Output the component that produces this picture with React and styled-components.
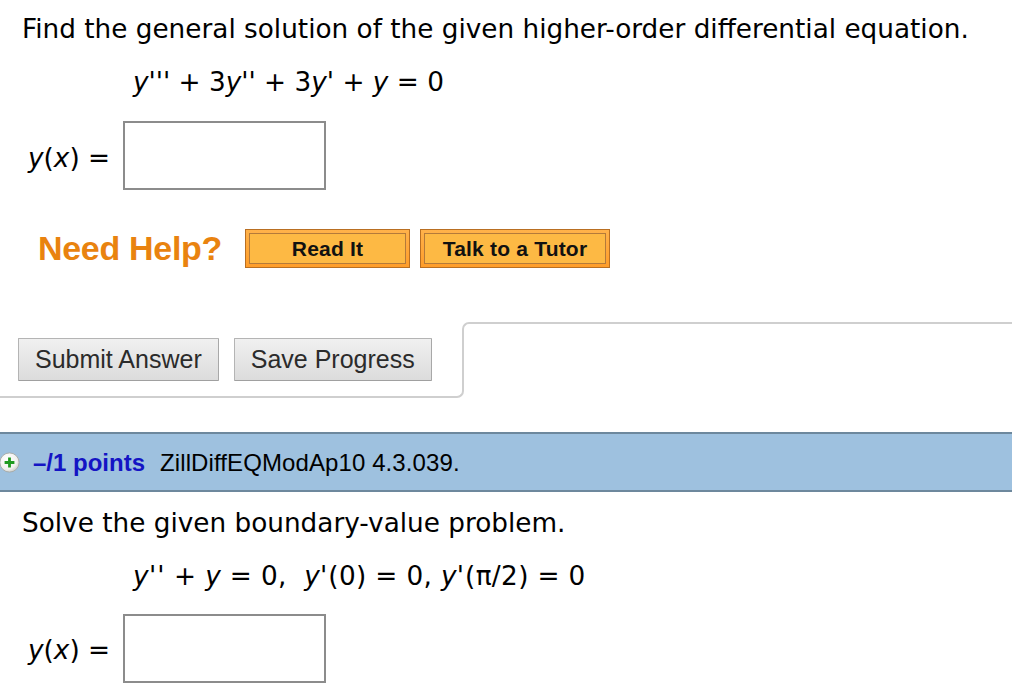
import React from "react";
import styled, { createGlobalStyle } from "styled-components";

const Global = createGlobalStyle`
  html, body { margin: 0; padding: 0; background: #fff; }
  body { font-family: "DejaVu Sans", Verdana, sans-serif; color: #000; }
`;

const Page = styled.div`
  width: 1012px;
  height: 692px;
  overflow: hidden;
  display: flex;
  flex-direction: column;
`;

const Question = styled.div`
  display: flex;
  flex-direction: column;
  padding-left: 22px;
  padding-top: ${(p) => p.$top}px;
`;

const Prompt = styled.div`
  font-size: 26.3px;
  line-height: 30px;
  white-space: nowrap;
`;

const Equation = styled.div`
  font-size: 26.3px;
  line-height: 30px;
  margin-top: 23px;
  margin-left: 111px;
  white-space: pre;
  letter-spacing: ${(p) => p.$ls || 0}px;
`;

const V = styled.i`
  font-style: italic;
`;

const Prime = styled.i`
  font-style: italic;
  letter-spacing: ${(p) => p.$ls || 0}px;
`;

const AnswerRow = styled.div`
  display: flex;
  align-items: flex-start;
  margin-top: ${(p) => p.$top}px;
  margin-left: 6px;
`;

const AnswerLabel = styled.span`
  font-size: 26.3px;
  line-height: 30px;
  margin-top: ${(p) => p.$top}px;
  width: 95px;
  white-space: pre;
`;

const AnswerBox = styled.div`
  width: 203px;
  height: 69px;
  box-sizing: border-box;
  border: 2px solid #8c8c8c;
  background: #fff;
`;

const HelpRow = styled.div`
  display: flex;
  align-items: center;
  margin-top: 39px;
  margin-left: 16px;
  height: 39px;
`;

const HelpLabel = styled.span`
  font-family: "Liberation Sans", Arial, sans-serif;
  font-weight: bold;
  font-size: 34px;
  color: #e9830f;
  letter-spacing: -0.3px;
  width: 207px;
  white-space: nowrap;
`;

const HelpButton = styled.div`
  box-sizing: border-box;
  width: ${(p) => p.$w}px;
  height: 39px;
  margin-right: 10px;
  border: 1px solid #b96f22;
  background: linear-gradient(#ffb24a, #ff9d2a);
  padding: 3px;
  display: flex;
`;

const HelpInner = styled.span`
  flex: 1;
  box-sizing: border-box;
  border: 1px solid #b47a3a;
  background: #fdb944;
  display: flex;
  align-items: center;
  justify-content: center;
  font-family: "Liberation Sans", Arial, sans-serif;
  font-weight: bold;
  font-size: 21px;
  letter-spacing: 0.2px;
  color: #111;
`;

const ActionRow = styled.div`
  display: flex;
  margin-top: 54px;
  height: 76px;
`;

const ActionLeft = styled.div`
  box-sizing: border-box;
  width: 464px;
  margin-top: 9px;
  padding: 7px 0 0 18px;
  border-right: 2px solid #cfcfcf;
  border-bottom: 2px solid #cfcfcf;
  border-bottom-right-radius: 7px;
  display: flex;
  align-items: flex-start;
  gap: 15px;
`;

const ActionRight = styled.div`
  flex: 1;
  margin-left: -2px;
  margin-bottom: 9px;
  border-top: 2px solid #cfcfcf;
  border-left: 2px solid #cfcfcf;
  border-top-left-radius: 7px;
`;

const GrayButton = styled.button`
  box-sizing: border-box;
  height: 43px;
  padding: 0 16px;
  border: 1px solid #b4b4b4;
  border-right-color: #a8a8a8;
  border-bottom-color: #a0a0a0;
  background: linear-gradient(#f0f0f0, #dcdcdc);
  font-family: "Liberation Sans", Arial, sans-serif;
  font-size: 25px;
  color: #2b2b2b;
  border-radius: 1px;
`;

const PointsBar = styled.div`
  margin-top: 34px;
  box-sizing: border-box;
  height: 60px;
  background: #9ec1df;
  border-top: 2px solid #6d889d;
  border-bottom: 2px solid #6d889d;
  display: flex;
  align-items: center;
  font-family: "Liberation Sans", Arial, sans-serif;
  font-size: 24px;
  padding-top: 1px;
`;

const PlusIcon = styled.svg`
  width: 21px;
  height: 21px;
  margin-left: -1px;
  margin-right: 13px;
  flex: none;
`;

const Points = styled.span`
  font-weight: bold;
  color: #1414c4;
  margin-right: 15px;
`;

const Code = styled.span`
  color: #000;
  letter-spacing: 0.1px;
`;

export default function App() {
  return (
    <Page>
      <Global />
      <Question $top={14}>
        <Prompt>Find the general solution of the given higher-order differential equation.</Prompt>
        <Equation>
          <V>y</V><Prime>'''</Prime> + 3<V>y</V><Prime>''</Prime> + 3<V>y</V><Prime>'</Prime> + <V>y</V> = 0
        </Equation>
        <AnswerRow $top={24}>
          <AnswerLabel $top={22}>
            <V>y</V>(<V>x</V>) =
          </AnswerLabel>
          <AnswerBox />
        </AnswerRow>
        <HelpRow>
          <HelpLabel>Need Help?</HelpLabel>
          <HelpButton $w={165}>
            <HelpInner>Read It</HelpInner>
          </HelpButton>
          <HelpButton $w={190}>
            <HelpInner>Talk to a Tutor</HelpInner>
          </HelpButton>
        </HelpRow>
      </Question>
      <ActionRow>
        <ActionLeft>
          <GrayButton>Submit Answer</GrayButton>
          <GrayButton>Save Progress</GrayButton>
        </ActionLeft>
        <ActionRight />
      </ActionRow>
      <PointsBar>
        <PlusIcon viewBox="0 0 21 21">
          <defs>
            <radialGradient id="pg" cx="0.4" cy="0.35" r="0.7">
              <stop offset="0" stopColor="#ffffff" />
              <stop offset="0.7" stopColor="#f1f1ee" />
              <stop offset="1" stopColor="#c9c9c4" />
            </radialGradient>
          </defs>
          <circle cx="10.5" cy="10.5" r="9.6" fill="url(#pg)" stroke="#a9aaa6" strokeWidth="0.9" />
          <path d="M9.1 5.6h2.8v3.5h3.5v2.8h-3.5v3.5H9.1v-3.5H5.6V9.1h3.5z" fill="#1f9a1f" />
        </PlusIcon>
        <Points>–/1 points</Points>
        <Code>ZillDiffEQModAp10 4.3.039.</Code>
      </PointsBar>
      <Question $top={16}>
        <Prompt>Solve the given boundary-value problem.</Prompt>
        <Equation $ls={0.35}>
          <V>y</V><Prime $ls={1}>''</Prime> + <V>y</V> = 0,  <V>y</V><Prime $ls={1}>'</Prime>(0) = 0, <V>y</V><Prime $ls={1}>'</Prime>(π/2) = 0
        </Equation>
        <AnswerRow $top={23}>
          <AnswerLabel $top={21}>
            <V>y</V>(<V>x</V>) =
          </AnswerLabel>
          <AnswerBox />
        </AnswerRow>
      </Question>
    </Page>
  );
}
